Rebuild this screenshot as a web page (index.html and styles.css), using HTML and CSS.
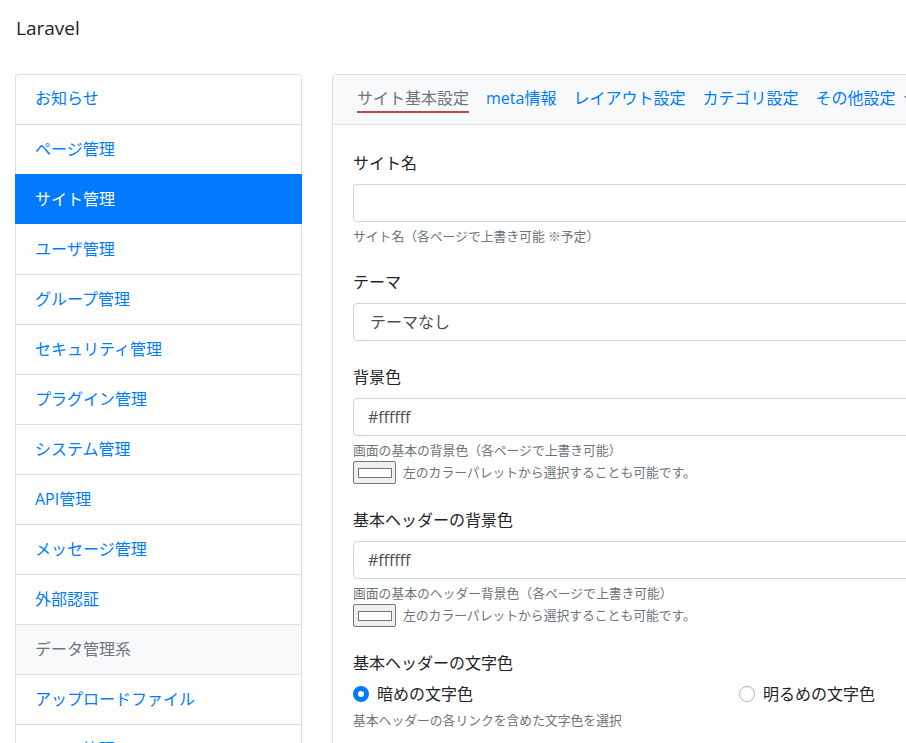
FILE: index.html
```html
<!DOCTYPE html>
<html lang="ja">
<head>
<meta charset="utf-8">
<title>Laravel</title>
<link rel="stylesheet" href="styles.css">
</head>
<body>
<header class="navbar">
  <span class="brand">Laravel</span>
</header>
<div class="page">
  <nav class="side">
    <a class="item">お知らせ</a>
    <a class="item">ページ管理</a>
    <a class="item active">サイト管理</a>
    <a class="item">ユーザ管理</a>
    <a class="item">グループ管理</a>
    <a class="item">セキュリティ管理</a>
    <a class="item">プラグイン管理</a>
    <a class="item">システム管理</a>
    <a class="item">API管理</a>
    <a class="item">メッセージ管理</a>
    <a class="item">外部認証</a>
    <div class="item head">データ管理系</div>
    <a class="item">アップロードファイル</a>
    <a class="item">テーマ管理</a>
  </nav>
  <main class="card">
    <div class="card-header">
      <span class="tab current">サイト基本設定</span>
      <span class="tab">meta情報</span>
      <span class="tab">レイアウト設定</span>
      <span class="tab">カテゴリ設定</span>
      <span class="tab">その他設定<span class="caret"></span></span>
    </div>
    <div class="card-body">
      <div class="group">
        <label class="label">サイト名</label>
        <div class="input"></div>
        <div class="help">サイト名（各ページで上書き可能 ※予定）</div>
      </div>
      <div class="group">
        <label class="label">テーマ</label>
        <div class="input select">テーマなし</div>
      </div>
      <div class="group">
        <label class="label">背景色</label>
        <div class="input">#ffffff</div>
        <div class="help">画面の基本の背景色（各ページで上書き可能）</div>
        <div class="color-row"><span class="swatch"><span class="swatch-in"></span></span><span class="help-inline">左のカラーパレットから選択することも可能です。</span></div>
      </div>
      <div class="group">
        <label class="label">基本ヘッダーの背景色</label>
        <div class="input">#ffffff</div>
        <div class="help">画面の基本のヘッダー背景色（各ページで上書き可能）</div>
        <div class="color-row"><span class="swatch"><span class="swatch-in"></span></span><span class="help-inline">左のカラーパレットから選択することも可能です。</span></div>
      </div>
      <div class="group">
        <label class="label">基本ヘッダーの文字色</label>
        <div class="radios">
          <div class="radio"><span class="dot checked"></span>暗めの文字色</div>
          <div class="radio"><span class="dot"></span>明るめの文字色</div>
        </div>
        <div class="help">基本ヘッダーの各リンクを含めた文字色を選択</div>
      </div>
    </div>
  </main>
</div>
</body>
</html>
```
FILE: styles.css
```css
html, body {
  margin: 0;
  padding: 0;
  overflow: hidden;
  background: #fff;
}
body {
  font-family: "Open Sans", "Noto Sans CJK JP", sans-serif;
  font-size: 16px;
  line-height: 1.5;
  color: #212529;
  width: 906px;
  height: 743px;
}
.navbar {
  height: 56px;
  display: flex;
  align-items: center;
  padding-left: 16px;
}
.brand {
  font-size: 19px;
  color: #212529;
}
.page {
  display: flex;
  align-items: flex-start;
  padding-top: 18px;
  padding-left: 15px;
  width: 1300px;
}
.side {
  width: 287px;
  flex: none;
  display: flex;
  flex-direction: column;
  border: 1px solid #dfdfdf;
  border-radius: 4px;
  box-sizing: border-box;
}
.item {
  display: block;
  height: 50px;
  box-sizing: border-box;
  padding: 12px 20px 12px 19px;
  color: #007bff;
  border-top: 1px solid #dfdfdf;
  line-height: 24px;
}
.item:first-child {
  border-top: none;
  height: 49px;
  padding-top: 11px;
}
.item.active {
  background: #007bff;
  color: #fff;
  border-top-color: #007bff;
  margin: 0 -1px;
  padding-left: 20px;
}
.item.active + .item {
  border-top-color: transparent;
}
.item.head {
  background: #f8f9fa;
  color: #6c757d;
}
.card {
  margin-left: 30px;
  width: 920px;
  flex: none;
  border: 1px solid #dfdfdf;
  border-radius: 4px;
}
.card-header {
  background: #f8f9fa;
  border-bottom: 1px solid #dfdfdf;
  height: 50px;
  box-sizing: border-box;
  display: flex;
  align-items: flex-start;
  gap: 17px;
  padding: 11px 0 0 24px;
}
.tab {
  color: #007bff;
  line-height: 24px;
  white-space: nowrap;
}
.tab.current {
  color: #6c757d;
  border-bottom: 2px solid #b94a48;
  padding-bottom: 1px;
}
.caret {
  display: inline-block;
  margin-left: 9px;
  vertical-align: 3px;
  border-top: 5px solid #6c757d;
  border-left: 4px solid transparent;
  border-right: 4px solid transparent;
}
.card-body {
  padding: 26px 20px 20px 20px;
}
.group {
  margin-bottom: 24px;
}
.label {
  display: block;
  margin-bottom: 9px;
  line-height: 24px;
}
.input {
  height: 38px;
  box-sizing: border-box;
  border: 1px solid #ced4da;
  border-radius: 4px;
  padding: 6px 14px;
  color: #495057;
  line-height: 24px;
}
.select {
  padding-left: 16px;
}
.help, .help-inline {
  font-size: 12.8px;
  line-height: 19px;
  color: #6c757d;
}
.help {
  margin-top: 5px;
}
.color-row {
  display: flex;
  align-items: center;
  gap: 7px;
  margin-top: 1px;
}
.swatch {
  width: 43px;
  height: 23px;
  box-sizing: border-box;
  border: 1px solid #767676;
  border-radius: 2px;
  background: #efefef;
  display: flex;
  align-items: center;
  justify-content: center;
}
.swatch-in {
  width: 34px;
  height: 10px;
  box-sizing: border-box;
  border: 1px solid #777;
  background: #fff;
}
.radios {
  display: grid;
  grid-template-columns: 386px 386px;
  line-height: 24px;
  margin-top: -2px;
}
.radio {
  display: flex;
  align-items: center;
}
.dot {
  width: 16px;
  height: 16px;
  box-sizing: border-box;
  border-radius: 50%;
  border: 1px solid #adb5bd;
  background: #fff;
  margin-right: 8px;
}
.dot.checked {
  border: 5px solid #007bff;
  background: #fff;
}
```
